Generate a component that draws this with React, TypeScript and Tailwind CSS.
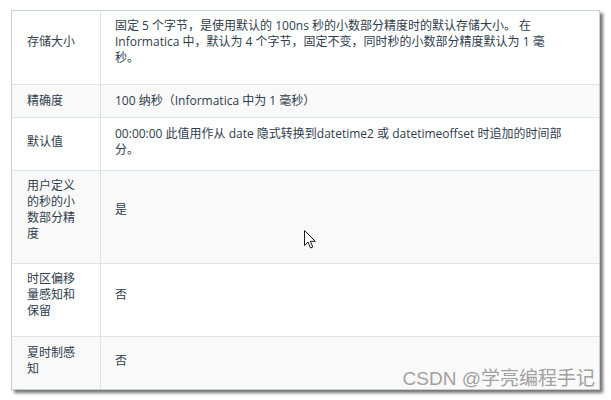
import React from 'react';

interface Row {
  label: string[];
  value: string[];
  height: number;
  shift: string;
  gray: boolean;
}

const rows: Row[] = [
  {
    label: ['存储大小'],
    value: [
      '固定 5 个字节，是使用默认的 100ns 秒的小数部分精度时的默认存储大小。 在',
      'Informatica 中，默认为 4 个字节，固定不变，同时秒的小数部分精度默认为 1 毫',
      '秒。',
    ],
    height: 73,
    shift: 'pb-[11px]',
    gray: false,
  },
  {
    label: ['精确度'],
    value: ['100 纳秒（Informatica 中为 1 毫秒）'],
    height: 33,
    shift: 'pb-[1px]',
    gray: true,
  },
  {
    label: ['默认值'],
    value: ['00:00:00 此值用作从 date 隐式转换到datetime2 或 datetimeoffset 时追加的时间部', '分。'],
    height: 53,
    shift: 'pb-[4px]',
    gray: false,
  },
  {
    label: ['用户定义', '的秒的小', '数部分精', '度'],
    value: ['是'],
    height: 93,
    shift: 'pb-[15px]',
    gray: true,
  },
  {
    label: ['时区偏移', '量感知和', '保留'],
    value: ['否'],
    height: 73,
    shift: 'pb-[11px]',
    gray: false,
  },
  {
    label: ['夏时制感', '知'],
    value: ['否'],
    height: 53,
    shift: 'pb-[5px]',
    gray: true,
  },
];

// 鼠标指针
const Cursor = () => (
  <svg width="13" height="20" viewBox="0 0 13 20" className="absolute left-[304px] top-[230px]">
    <path
      d="M0.5 0.5 L0.5 15.5 L4 12 L6.5 18 L8.8 17 L6.3 11.3 L11.3 11.3 Z"
      fill="#fff"
      stroke="#1a1a1a"
      strokeWidth="1"
      strokeLinejoin="miter"
    />
  </svg>
);

export default function App() {
  return (
    <div
      className="relative w-[611px] h-[400px] bg-white overflow-hidden"
      style={{ fontFamily: '"Open Sans", "Noto Sans CJK SC", sans-serif' }}
    >
      <div className="absolute left-[11px] top-[10px] w-[589px] border border-[#c9ced4] bg-white shadow-[3px_3px_3px_rgba(0,0,0,0.55)]">
        {rows.map((row, i) => (
          <div
            key={i}
            className={`flex ${i > 0 ? 'border-t border-[#dde2e8]' : ''} ${row.gray ? 'bg-[#f9f9f9]' : 'bg-white'}`}
            style={{ height: row.height }}
          >
            <div className={`w-[89px] shrink-0 border-r border-[#dde2e8] pl-[15px] flex items-center ${row.shift}`}>
              <div className="text-[12px] leading-[16px] text-[#2f3d4c]">
                {row.label.map((l, j) => (
                  <div key={j}>{l}</div>
                ))}
              </div>
            </div>
            <div className={`flex-1 pl-[14px] flex items-center ${row.shift}`}>
              <div className="text-[12px] leading-[16px] text-[#2f3d4c] whitespace-nowrap">
                {row.value.map((v, j) => (
                  <div key={j}>{v}</div>
                ))}
              </div>
            </div>
          </div>
        ))}
      </div>

      <Cursor />

      <div
        className="absolute right-[16px] top-[368px] text-[19px] leading-[22px] text-[#a0a0a0]"
        style={{ fontFamily: '"Liberation Sans", "Noto Sans CJK SC", sans-serif', textShadow: '0 0 1px #fff' }}
      >
        CSDN @学亮编程手记
      </div>
    </div>
  );
}
